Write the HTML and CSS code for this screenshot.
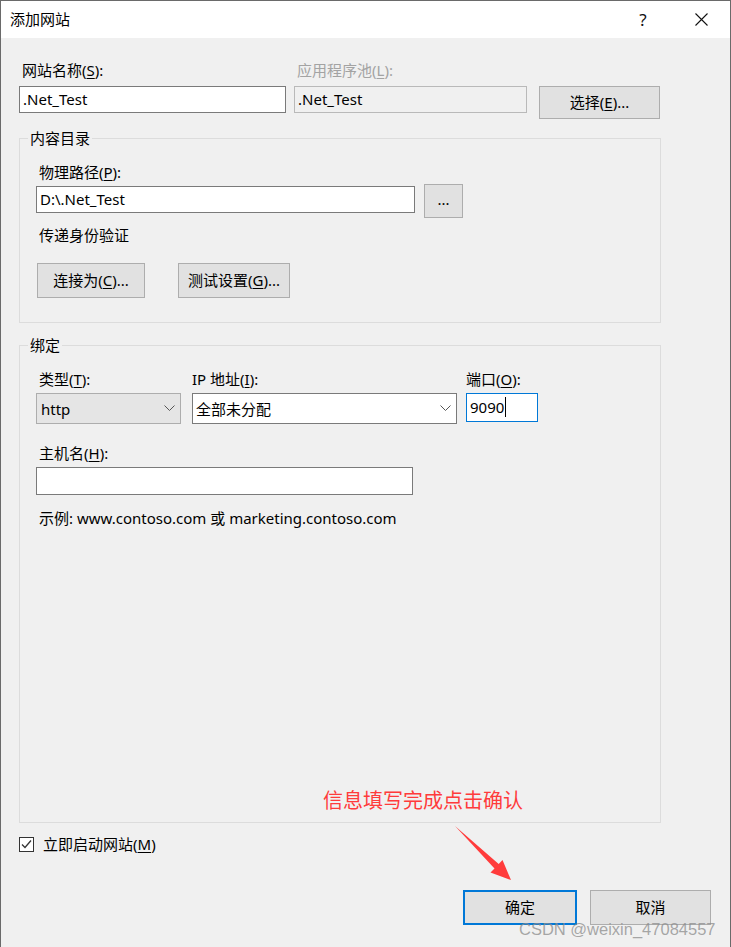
FILE: index.html
```html
<!DOCTYPE html>
<html lang="zh-CN">
<head>
<meta charset="utf-8">
<title>添加网站</title>
<link rel="stylesheet" href="styles.css">
</head>
<body>
<div class="window">
  <div class="titlebar">
    <span class="title">添加网站</span>
    <span class="help">?</span>
    <span class="close"><svg width="13" height="13" viewBox="0 0 13 13"><path d="M0.5 0.5 L12.5 12.5 M12.5 0.5 L0.5 12.5" stroke="#111" stroke-width="1.1" fill="none"/></svg></span>
  </div>
  <div class="content">
    <div class="site-row">
      <div class="lbl">网站名称(<u>S</u>):</div>
      <div class="lbl disabled">应用程序池(<u>L</u>):</div>
      <div></div>
      <div class="textbox w-name">.Net_Test</div>
      <div class="textbox readonly w-pool">.Net_Test</div>
      <div class="btn btn-select">选择(<u>E</u>)...</div>
    </div>

    <fieldset class="group group-content">
      <legend>内容目录</legend>
      <div class="body-content">
        <div class="lbl">物理路径(<u>P</u>):</div>
        <div class="path-row">
          <div class="textbox w-path">D:\.Net_Test</div>
          <div class="btn btn-browse">...</div>
        </div>
        <div class="lbl auth">传递身份验证</div>
        <div class="auth-row">
          <div class="btn btn-connect">连接为(<u>C</u>)...</div>
          <div class="btn btn-test">测试设置(<u>G</u>)...</div>
        </div>
      </div>
    </fieldset>

    <fieldset class="group group-binding">
      <legend>绑定</legend>
      <div class="body-binding">
        <div class="binding-grid">
          <div class="lbl">类型(<u>T</u>):</div>
          <div class="lbl lbl-ip">IP 地址(<u>I</u>):</div>
          <div class="lbl lbl-port">端口(<u>O</u>):</div>
          <div class="select sel-type">
            <span>http</span>
            <svg width="11" height="7" viewBox="0 0 11 7"><path d="M0.5 0.5 L5.5 5.5 L10.5 0.5" stroke="#555" stroke-width="1" fill="none"/></svg>
          </div>
          <div class="select sel-ip">
            <span>全部未分配</span>
            <svg width="11" height="7" viewBox="0 0 11 7"><path d="M0.5 0.5 L5.5 5.5 L10.5 0.5" stroke="#555" stroke-width="1" fill="none"/></svg>
          </div>
          <div class="textbox port">9090<span class="caret"></span></div>
        </div>
        <div class="lbl host-lbl">主机名(<u>H</u>):</div>
        <div class="textbox w-host"></div>
        <div class="lbl example">示例: www.contoso.com 或 marketing.contoso.com</div>
      </div>
    </fieldset>

    <div class="check-row">
      <span class="checkbox"><svg width="13" height="13" viewBox="0 0 13 13"><path d="M2 6.5 L5 9.5 L11 2.5" stroke="#333" stroke-width="1.3" fill="none"/></svg></span>
      <span>立即启动网站(<u>M</u>)</span>
    </div>

    <div class="footer">
      <div class="btn btn-ok">确定</div>
      <div class="btn btn-cancel">取消</div>
    </div>
  </div>
</div>

<div class="annotation">信息填写完成点击确认</div>
<svg class="arrow" width="731" height="947" viewBox="0 0 731 947">
  <polygon points="455,826 498.7,864 502.5,860 511,880 490.5,872.5 494.5,868.4" fill="#ff3b3b"/>
</svg>
<div class="watermark">CSDN @weixin_47084557</div>
</body>
</html>
```

FILE: styles.css
```css
* { box-sizing: border-box; }

html, body {
  margin: 0;
  padding: 0;
  background: #f0f0f0;
}

body {
  position: relative;
  width: 731px;
  height: 947px;
  overflow: hidden;
  font-family: "Noto Sans", "Noto Sans CJK SC", sans-serif;
  font-size: 15px;
  color: #000;
}

.window {
  width: 731px;
  height: 947px;
  border: 1px solid #6a6a6a;
  border-bottom: none;
  background: #f0f0f0;
}

.titlebar {
  height: 37px;
  background: #fff;
  display: flex;
  align-items: center;
  padding: 0 9px 0 9px;
}

.title {
  flex: 1;
  line-height: 37px;
}

.help {
  width: 20px;
  text-align: center;
  font-size: 17px;
  line-height: 37px;
  color: #111;
}

.close {
  width: 40px;
  margin-left: 28px;
  display: flex;
  justify-content: center;
  align-items: center;
}

.content {
  padding: 22px 0 0 18px;
}

u {
  text-decoration-thickness: 1px;
  text-underline-offset: 2px;
}

.lbl {
  line-height: 20px;
  padding-left: 3px;
  white-space: nowrap;
}

.disabled { color: #a3a3a3; }

.site-row {
  display: grid;
  grid-template-columns: 275px 245px 121px;
  row-gap: 6px;
  align-items: start;
}

.textbox {
  height: 27px;
  border: 1px solid #7a7a7a;
  background: #fff;
  padding-left: 3px;
  line-height: 25px;
  white-space: nowrap;
}

.readonly {
  background: #f0f0f0;
  border-color: #b9b9b9;
}

.w-name { width: 267px; }
.w-pool { width: 233px; }

.btn {
  display: flex;
  align-items: center;
  justify-content: center;
  background: #e1e1e1;
  border: 1px solid #adadad;
  white-space: nowrap;
  line-height: 20px;
  padding-bottom: 2px;
}

.btn-select { width: 121px; height: 33px; }

.group {
  margin: 0;
  padding: 0;
  width: 642px;
  min-width: 0;
  border: 1px solid #dcdcdc;
}

.group legend {
  margin-left: 8px;
  padding: 0 2px;
  line-height: 20px;
}

.group-content { margin-top: 9px; }

.body-content {
  padding: 14px 0 24px 16px;
}

.path-row {
  display: flex;
  align-items: flex-start;
  gap: 9px;
  margin-top: 2px;
}

.w-path { width: 379px; margin-top: 2px; }

.btn-browse { width: 39px; height: 34px; padding-bottom: 4px; }

.auth { margin-top: 7px; }

.auth-row {
  display: flex;
  gap: 33px;
  margin-top: 18px;
  margin-left: 1px;
}

.btn-connect { width: 108px; height: 35px; }
.btn-test { width: 112px; height: 35px; }

.group-binding { margin-top: 12px; }

.body-binding {
  height: 467px;
  padding: 14px 0 0 16px;
}

.binding-grid {
  display: grid;
  grid-template-columns: 156px 274px 72px;
  row-gap: 4px;
  align-items: start;
}

.lbl-ip, .lbl-port { padding-left: 0; }

.select {
  height: 31px;
  display: flex;
  align-items: center;
  justify-content: space-between;
  white-space: nowrap;
}

.sel-type {
  width: 145px;
  background: #e5e5e5;
  border: 1px solid #adadad;
  padding: 0 5px 0 4px;
}

.sel-ip {
  width: 265px;
  background: #fff;
  border: 1px solid #7a7a7a;
  padding: 0 5px 0 3px;
}

.port {
  width: 72px;
  height: 29px;
  border-color: #0078d7;
  line-height: 27px;
}

.caret {
  display: inline-block;
  width: 1px;
  height: 20px;
  background: #000;
  vertical-align: middle;
  margin-left: 1px;
  margin-top: -3px;
}

.host-lbl { margin-top: 19px; }

.w-host { width: 377px; height: 28px; margin-top: 4px; }

.example { margin-top: 13px; }

.check-row {
  display: flex;
  align-items: center;
  margin-top: 11px;
  line-height: 20px;
}

.checkbox {
  width: 15px;
  height: 15px;
  border: 1px solid #333;
  background: #fff;
  margin-right: 9px;
  display: flex;
  align-items: center;
  justify-content: center;
}

.footer {
  display: flex;
  justify-content: flex-end;
  gap: 13px;
  margin-top: 36px;
  padding-right: 19px;
}

.btn-ok {
  width: 114px;
  height: 35px;
  border: 2px solid #0078d7;
}

.btn-cancel { width: 121px; height: 35px; }

.annotation {
  position: absolute;
  left: 323px;
  top: 789px;
  font-size: 20px;
  line-height: 22px;
  color: #ff3b3b;
  font-family: "Noto Sans CJK SC", sans-serif;
  white-space: nowrap;
}

.arrow {
  position: absolute;
  left: 0;
  top: 0;
  pointer-events: none;
}

.watermark {
  position: absolute;
  left: 519px;
  top: 919px;
  font-family: "Liberation Sans", sans-serif;
  font-size: 16.5px;
  line-height: 20px;
  color: rgba(140, 140, 140, 0.75);
  white-space: nowrap;
}
```
